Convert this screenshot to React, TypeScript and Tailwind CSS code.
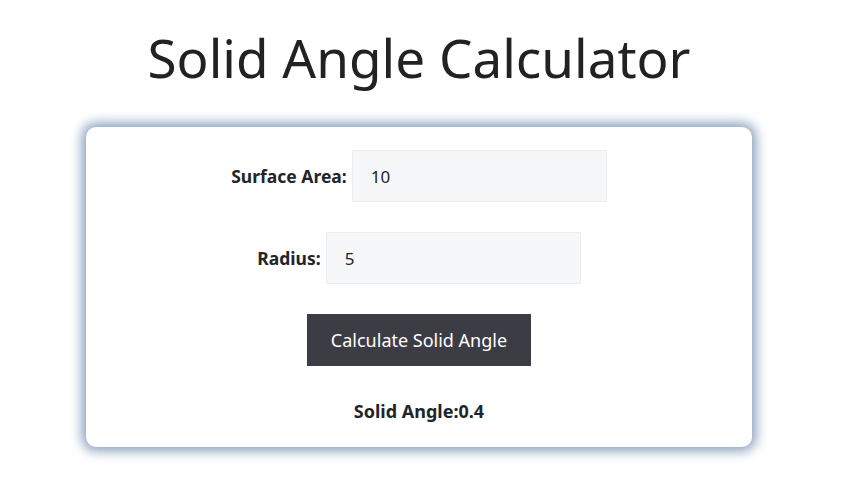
import React, { useState } from "react";

export default function App() {
  const [area, setArea] = useState("10");
  const [radius, setRadius] = useState("5");
  const [result, setResult] = useState("0.4");
  const calc = () => {
    const a = parseFloat(area);
    const r = parseFloat(radius);
    if (!isNaN(a) && !isNaN(r) && r !== 0) setResult(String(a / (r * r)));
  };
  return (
    <div className="w-[838px] bg-white text-[#212529] pb-[40px]" style={{ fontFamily: '"Noto Sans", "Open Sans", sans-serif' }}>
      <h1 className="text-center text-[53px] leading-none font-normal pt-[31px] text-[#222]">Solid Angle Calculator</h1>
      <div className="mx-auto mt-[43px] w-[666px] rounded-[10px] bg-white shadow-[0_0_12px_4px_rgba(105,135,172,0.8)] pt-[23px] pb-[24px] flex flex-col items-center">
        <div className="flex items-center gap-[5px]">
          <label className="text-[17.5px] font-bold">Surface Area:</label>
          <input
            value={area}
            onChange={(e) => setArea(e.target.value)}
            className="w-[255px] h-[52px] bg-[#f6f7f9] border border-[#ecedef] px-[18px] text-[17px] outline-none"
          />
        </div>
        <div className="flex items-center gap-[5px] mt-[30px]">
          <label className="text-[17.5px] font-bold">Radius:</label>
          <input
            value={radius}
            onChange={(e) => setRadius(e.target.value)}
            className="w-[255px] h-[52px] bg-[#f6f7f9] border border-[#ecedef] px-[18px] text-[17px] outline-none"
          />
        </div>
        <button
          onClick={calc}
          className="mt-[30px] h-[52px] w-[224px] bg-[#3c3c44] text-white text-[18px]"
        >
          Calculate Solid Angle
        </button>
        <div className="mt-[33px] text-[18px] font-bold leading-[24px]">Solid Angle:{result}</div>
      </div>
    </div>
  );
}
